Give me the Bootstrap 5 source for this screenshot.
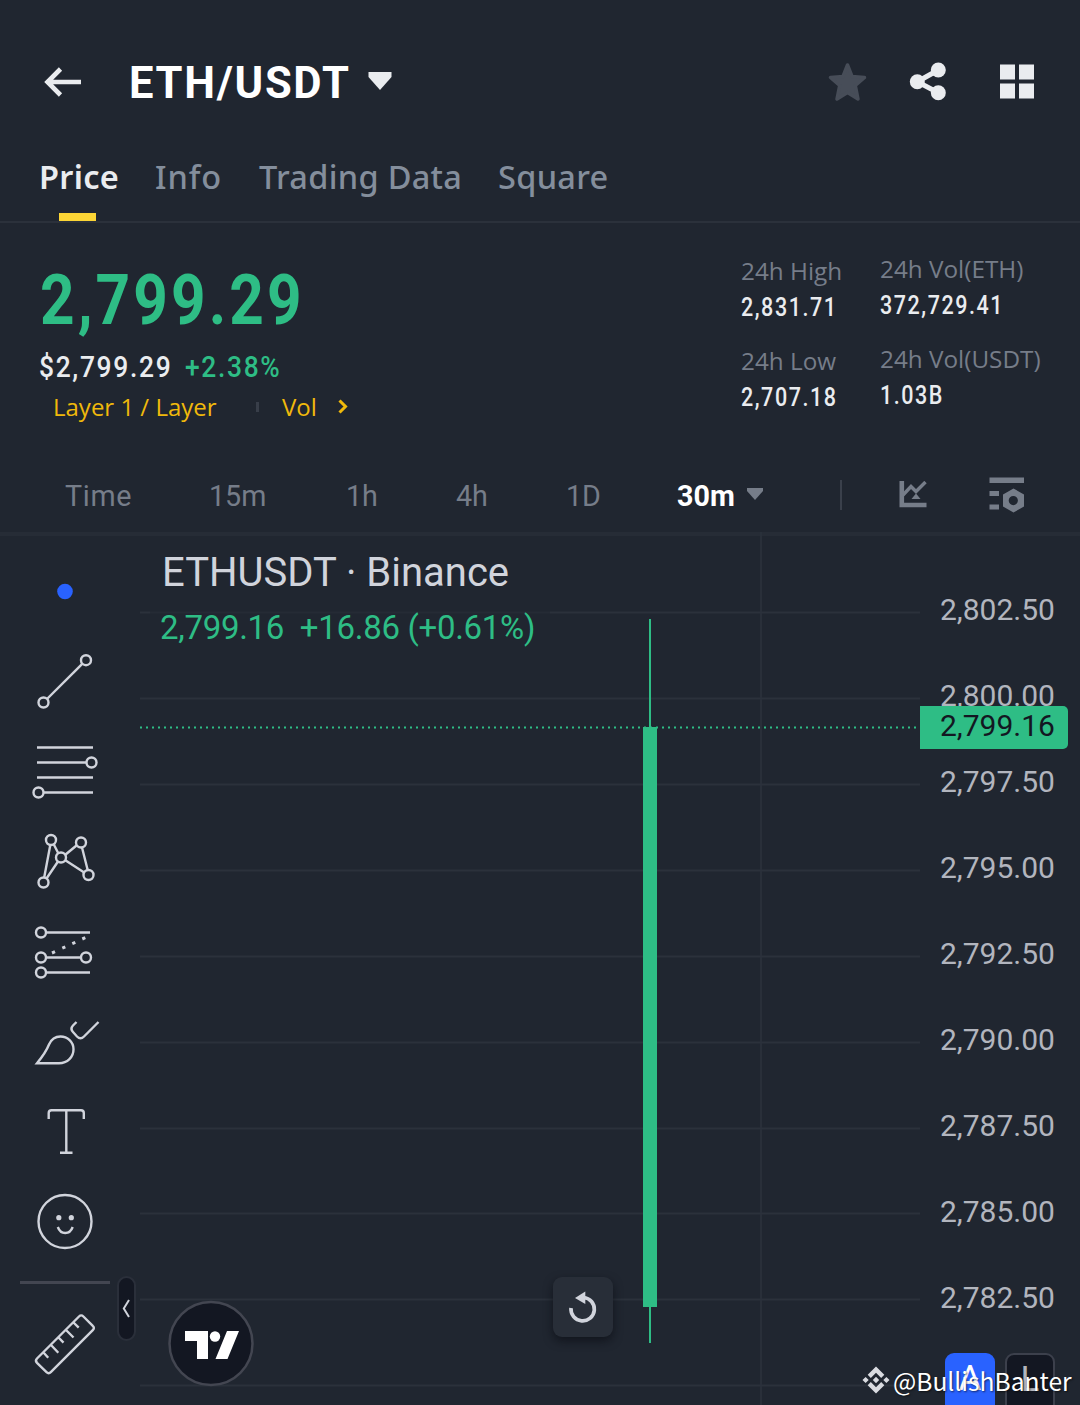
<!DOCTYPE html>
<html lang="en">
<head>
<meta charset="utf-8">
<meta name="viewport" content="width=device-width, initial-scale=1">
<title>ETH/USDT</title>
<link href="https://cdn.jsdelivr.net/npm/bootstrap@5.3.0/dist/css/bootstrap.min.css" rel="stylesheet">
<style>
:root{--bg:#202630;--line:#2b313b;--txt:#eaecef;--muted:#848e9c;--dim:#767d89;--up:#2ebd85;--gold:#f0b90b;--ink:#d1d4dc}
body{background:var(--bg);color:var(--txt);font-family:Roboto,"Liberation Sans",sans-serif;width:1080px;height:1405px;overflow:hidden}
svg{display:block;flex:none}
.topbar{height:145px;padding:19px 46px 0 44px}
.pair{font-size:43.5px;font-weight:700;letter-spacing:1.7px;line-height:50px;color:#fff;margin-left:47px;width:243px;padding-top:3px}
.tabs{height:78px;border-bottom:2px solid var(--line);padding-left:39px;font-family:"Noto Sans",sans-serif;font-size:32.5px;font-weight:500;color:var(--muted)}
.tabs .nav-link{padding:0;line-height:63px;color:inherit;position:relative;white-space:nowrap;letter-spacing:.3px}
.tabs .nav-link.active{color:var(--txt)}
.tabs .nav-link.active::after{content:"";position:absolute;left:20px;bottom:0;width:37px;height:8px;background:#fcd535}
.t1{width:116px;font-weight:600}.t2{width:104px}.t3{width:239px}
.tabs .t2{letter-spacing:.9px}
.ticker{height:237px}
.condensed{display:inline-block;transform-origin:0 50%;white-space:nowrap}
.lastprice{font-size:71px;font-weight:700;line-height:84px;color:var(--up);letter-spacing:3.6px;transform:scaleX(.85);margin-left:1px}
.quote{padding:35px 0 0 39px;width:741px}
.fiat{font-size:30px;line-height:36px;font-weight:500}
.fiat .condensed{transform:scaleX(.88);letter-spacing:1.9px}
.fiat .usd{width:146px}.fiat .chg{color:var(--up)}
.tagline{font-family:"Open Sans",sans-serif;font-size:24px;line-height:40px;color:var(--gold);padding-left:14px;margin-top:2px}
.tagline .layer{width:203px}.tagline .vol{width:55px}
.tagline .bar{width:3px;height:10px;background:#383e49;margin-right:23px}
.stats{line-height:36px;font-size:25px}
.stats .lbl{font-family:"Open Sans",sans-serif;color:var(--dim);font-size:24.3px;white-space:nowrap;height:37px}
.stats .val{font-weight:500;transform:scaleX(.86);letter-spacing:1.8px;height:36px;display:block}
.stats .pairstat{height:90px}
.sa{width:139px;padding-top:30px}.sb{padding-top:28px}
.intervals{height:72px;font-size:28.7px;color:var(--dim);line-height:72px;padding-left:65px}
.intervals span{white-space:nowrap}
.sep{width:2px;height:30px;background:#3a404b;margin-top:-3px}
.chartarea{height:873px;border-top:4px solid #262c36}
.tools{width:140px;padding-top:10px}
.tools .rule{width:90px;height:3px;background:#434651;margin:15px 0 0 20px}
.tools svg{stroke:var(--ink);fill:none;stroke-width:2.4}
.plot{width:780px;margin-top:-4px}
.legend{left:22px;top:19px;line-height:44px;white-space:nowrap}
.legend .sym{font-size:40px;color:var(--ink)}
.legend .ohlc{font-size:33px;color:var(--up);line-height:44px;margin:11px 0 0 -2px;letter-spacing:-.3px}
.axis{width:160px;padding:31px 0 0 20px;font-size:30px;color:#b2b5be}
.axis .tick{height:86px;line-height:86px}
.pricetag{left:0;top:170px;width:148px;height:43px;line-height:39px;padding-left:20px;background:var(--up);color:#131722;border-radius:0 5px 5px 0}
.handle{left:117px;top:740px;width:19px;height:65px;border-radius:10px;background:#131722;border:2px solid #2a2f3a}
.resetbtn{left:413px;top:745px;width:60px;height:60px;border-radius:9px;background:#282e38;box-shadow:0 4px 10px rgba(8,10,16,.6)}
.scalebtn{width:50px;height:60px;border-radius:9px;font-size:35px;line-height:52px;text-align:center;top:817px}
.auto{left:25px;background:#2962ff;color:#fff}
.logs{left:85px;background:#131722;border:2px solid #3c404c;color:#b2b5be;line-height:49px}
.wm{left:862px;top:1361px;color:#fff;font-family:"Noto Sans CJK SC",sans-serif;font-size:24.6px;line-height:38px;text-shadow:1px 1px 2px rgba(0,0,0,.6);font-weight:400}
.wm span{margin-left:3px}
</style>
<script src="https://cdn.jsdelivr.net/npm/bootstrap@5.3.0/dist/js/bootstrap.bundle.min.js"></script>
</head>
<body class="position-relative">
<header class="topbar d-flex align-items-center">
  <svg width="38" height="32" viewBox="44 66 38 32" fill="none" stroke="#eaecef" stroke-width="4.6"><path d="M81 82H48M60.500 69 47.500 82 60.500 95"/></svg>
  <div class="pair">ETH/USDT</div>
  <svg width="24" height="20" viewBox="368 72 24 20" class="me-auto" style="margin-left:-4px"><path d="M368.500 72H391.500V77L380 90 368.500 77Z" fill="#eaecef"/></svg>
  <svg width="40" height="42" viewBox="828 61 40 42"><path d="M847.500 65 852 76.500 864.500 77.500 855.300 85.500 858 99 847.500 92.500 837 99 839.700 85.500 830.500 77.500 843 76.500Z" fill="#474d58" stroke="#474d58" stroke-width="3.500" stroke-linejoin="round"/></svg>
  <svg width="38" height="40" viewBox="909 62 38 40" style="margin-left:41px"><path d="M938.300 70 917.300 81.700 938.300 92.700" fill="none" stroke="#eaecef" stroke-width="5"/><g fill="#eaecef"><circle cx="938.300" cy="70" r="7.500"/><circle cx="938.300" cy="92.700" r="7.500"/><circle cx="917.300" cy="81.700" r="7.500"/></g></svg>
  <svg width="34" height="36" viewBox="1000 64 34 36" style="margin-left:53px" fill="#eaecef"><path d="M1000 64.500h15v15h-15zM1019 64.500h15v15h-15zM1000 83.500h15v15h-15zM1019 83.500h15v15h-15z"/></svg>
</header>

<nav class="tabs nav flex-nowrap">
  <a class="nav-link active t1">Price</a><a class="nav-link t2">Info</a><a class="nav-link t3">Trading Data</a><a class="nav-link">Square</a>
</nav>

<section class="ticker d-flex">
  <div class="quote">
    <div class="condensed lastprice">2,799.29</div>
    <div class="fiat d-flex" style="margin-top:7px"><div class="usd"><span class="condensed">$2,799.29</span></div><span class="condensed chg">+2.38%</span></div>
    <div class="tagline d-flex align-items-center"><span class="layer">Layer 1 / Layer</span><span class="bar"></span><span class="vol">Vol</span>
      <svg width="12" height="16" viewBox="337 399 12 16" fill="none" stroke="#f0b90b" stroke-width="3"><path d="M339.500 400.500 345.500 406.500 339.500 412.500"/></svg></div>
  </div>
  <div class="stats d-flex">
    <div class="sa">
      <div class="pairstat"><div class="lbl">24h High</div><span class="condensed val">2,831.71</span></div>
      <div class="pairstat"><div class="lbl">24h Low</div><span class="condensed val">2,707.18</span></div>
    </div>
    <div class="sb">
      <div class="pairstat"><div class="lbl">24h Vol(ETH)</div><span class="condensed val">372,729.41</span></div>
      <div class="pairstat"><div class="lbl">24h Vol(USDT)</div><span class="condensed val">1.03B</span></div>
    </div>
  </div>
</section>

<div class="intervals d-flex align-items-center">
  <span style="width:144px;letter-spacing:.7px">Time</span><span style="width:137px">15m</span><span style="width:110px">1h</span><span style="width:110px">4h</span><span style="width:111px">1D</span>
  <span class="text-white fw-bold" style="width:70px">30m</span>
  <svg width="16" height="16" viewBox="747 488 16 16"><path d="M747 488H763V491L755 500 747 491Z" fill="#767d89"/></svg>
  <span class="sep" style="margin-left:77px"></span>
  <svg width="30" height="30" viewBox="898 481 30 30" style="margin-left:56px" fill="none" stroke="#767d89"><path d="M901.800 481V505H926.500" stroke-width="4.600"/><path d="M903 495 911 486.500 916 491.500 925.500 482" stroke-width="3.400"/><path d="M916 493.500 920.500 499H911.500Z" fill="#767d89" stroke="none"/></svg>
  <svg width="36" height="38" viewBox="989 477 36 38" style="margin-left:61px" fill="#767d89"><path d="M989.500 477.500H1024V483H989.500ZM989.500 491H999V496H989.500ZM989.500 504.500H999V509.500H989.500Z"/><path fill-rule="evenodd" d="M1013.500 488.500 1024 494.500V506.500L1013.500 512.500 1003 506.500V494.500ZM1013.300 496A4.600 4.600 0 1 0 1013.300 505.200A4.600 4.600 0 1 0 1013.300 496Z"/></svg>
</div>

<main class="chartarea d-flex position-relative">
  <div class="tools d-flex flex-column">
    <svg width="140" height="90"><circle cx="65" cy="45.500" r="7.800" fill="#2962ff" stroke="none"/></svg>
    <svg width="140" height="90"><circle cx="43.500" cy="66.500" r="5"/><circle cx="86" cy="24.200" r="5"/><path d="M47 63 82.500 27.700"/></svg>
    <svg width="140" height="90"><path d="M37 21.500H93M37 36.500H86M37 51.500H93M44 66.500H93"/><circle cx="91.500" cy="36.500" r="5"/><circle cx="38.500" cy="66.500" r="5"/></svg>
    <svg width="140" height="90"><path d="M44.200 61.500 50.300 29M53.700 28.300 58.300 37.200M65.300 38.800 76.800 29.300M82 31.500 87.700 54M84.200 56.500 65.300 44.200M58 45.500 46.500 62.500"/><circle cx="51" cy="24" r="5"/><circle cx="81" cy="26.500" r="5"/><circle cx="61" cy="41.500" r="5"/><circle cx="43.500" cy="66.500" r="5"/><circle cx="88.500" cy="59" r="5"/></svg>
    <svg width="140" height="90"><circle cx="41" cy="26.500" r="5"/><circle cx="41" cy="51.500" r="5"/><circle cx="41" cy="66.500" r="5"/><circle cx="86" cy="51.500" r="5"/><path d="M46 26.500H90M46 51.500H81M46 66.500H90"/><path stroke-width="3" d="M52 47 55 45.700M62.300 42.200 65.300 40.900M72.300 37.600 75.300 36.300M82.300 33 85.300 31.700"/></svg>
    <svg width="140" height="90"><path d="M37 67.200H59C67.500 67.200 73.500 61 73.500 53.200C73.500 46 67.500 40.500 60.500 40.500C54 40.500 51 44 49 48.500C46 56 43 60 37 67.200Z"/><path d="M76.500 26 73 29.500Q70 32.700 73 36L77 40.500Q80.500 44 84 40.500L98.500 26"/></svg>
    <svg width="140" height="90"><path d="M48.700 33V27Q48.700 24.200 51.500 24.200H81Q83.800 24.200 83.800 27V33M66.300 24.200V66.500M60 66.700H72.500"/></svg>
    <svg width="140" height="90"><circle cx="65" cy="45.500" r="26.500"/><circle cx="58.800" cy="41.700" r="2.600" fill="#d1d4dc" stroke="none"/><circle cx="71.300" cy="41.700" r="2.600" fill="#d1d4dc" stroke="none"/><path d="M57.800 51Q60 57 65.200 57Q70.500 57 72.700 51"/></svg>
    <div class="rule"></div>
    <svg width="140" height="120"><path d="M37 74.500 79 32.500Q81.200 30.300 83.400 32.500L92.800 41.900Q95 44 92.800 46.200L50.800 88.200Q48.700 90.300 46.500 88.200L37 78.900Q34.900 76.700 37 74.500ZM43.500 68.500 48.200 73.700M51 61 58.300 68.800M58.500 53.500 63.500 58.700M66 46 73.500 53.500M73.500 38.500 78.700 43.700"/></svg>
  </div>
  <div class="plot position-relative">
    <svg width="780" height="873" viewBox="140 532 780 873">
      <path d="M761 532V1405M140 612.500H920M140 698.500H920M140 784.500H920M140 870.500H920M140 956.500H920M140 1042.500H920M140 1128.500H920M140 1213.500H920M140 1299.500H920M140 1385.500H920" stroke="#2b313b" stroke-width="1.800"/>
      <path d="M150 610H550V616H150Z" fill="#202630" opacity=".5"/>
      <path d="M140 727.500H918" stroke="#2ebd85" stroke-width="2" stroke-dasharray="2 4"/>
      <path d="M649 619h2v724h-2zM643 727h14v580h-14z" fill="#2ebd85"/>
      <circle cx="211" cy="1343.500" r="41.500" fill="#131722" stroke="#434651" stroke-width="2.500"/>
      <path d="M185 1331H208V1359H197V1341H185ZM227 1331H239L227.500 1359H215.500Z" fill="#fff"/><circle cx="215" cy="1336.500" r="5.200" fill="#fff"/>
    </svg>
    <div class="legend position-absolute"><div class="sym">ETHUSDT · Binance</div><div class="ohlc">2,799.16&nbsp; +16.86 (+0.61%)</div></div>
    <div class="resetbtn position-absolute"><svg width="60" height="60" viewBox="553 1277 60 60"><path d="M571 1308A11.700 11.700 0 1 0 583.500 1297.500" fill="none" stroke="#d1d4dc" stroke-width="3.700"/><path d="M575 1298 585.300 1291.500V1304Z" fill="#d1d4dc"/></svg></div>
  </div>
  <div class="axis position-relative">
    <div class="tick">2,802.50</div><div class="tick">2,800.00</div><div class="tick">2,797.50</div><div class="tick">2,795.00</div><div class="tick">2,792.50</div><div class="tick">2,790.00</div><div class="tick">2,787.50</div><div class="tick">2,785.00</div><div class="tick">2,782.50</div>
    <div class="pricetag position-absolute">2,799.16</div>
    <div class="scalebtn auto position-absolute">A</div>
    <div class="scalebtn logs position-absolute">L</div>
  </div>
  <div class="handle position-absolute"><svg width="15" height="61" viewBox="119 1278 15 61"><path d="M129 1300 123.800 1308.500 129 1317" fill="none" stroke="#d1d4dc" stroke-width="2"/></svg></div>
</main>

<div class="wm position-absolute d-flex align-items-center">
  <svg width="28" height="28" viewBox="-14 -14 28 28" fill="#d9dbe0"><path d="M0-13.500 8.300-5.200 5.200-2.100 0-7.300-5.200-2.100-8.300-5.200ZM0 13.500 8.300 5.200 5.200 2.100 0 7.300-5.200 2.100-8.300 5.200ZM0-3.200 3.200 0 0 3.200-3.200 0ZM-10.400-3.100-7.300 0-10.400 3.100-13.500 0ZM10.400-3.100 13.500 0 10.400 3.100 7.300 0Z"/></svg>
  <span>@BullishBanter</span>
</div>
</body>
</html>
